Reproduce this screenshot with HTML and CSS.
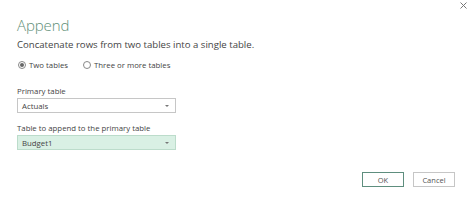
FILE: index.html
```html
<!DOCTYPE html>
<html lang="en">
<head>
    <meta charset="UTF-8">
    <title>Append</title>
    <link rel="stylesheet" href="styles.css">
</head>
<body>
    <div class="dialog">
        <button type="button" class="close" aria-label="Close">
            <svg width="7" height="7" viewBox="0 0 7 7"><path d="M0.5 0.5L6.5 6.5M6.5 0.5L0.5 6.5" stroke="#777" stroke-width="1" fill="none"/></svg>
        </button>
        <h1>Append</h1>
        <p class="intro">Concatenate rows from two tables into a single table.</p>

        <div class="radio-row">
            <label><span class="radio checked"></span>Two tables</label>
            <label><span class="radio"></span>Three or more tables</label>
        </div>

        <label class="field-label first">Primary table</label>
        <div class="select">
            <span>Actuals</span>
            <span class="arrow"></span>
        </div>

        <label class="field-label">Table to append to the primary table</label>
        <div class="select active">
            <span>Budget1</span>
            <span class="arrow"></span>
        </div>

        <div class="buttons">
            <button type="button" class="btn ok">OK</button>
            <button type="button" class="btn">Cancel</button>
        </div>
    </div>
</body>
</html>
```

FILE: styles.css
```css
body {
    margin: 0;
    background-color: #fff;
    font-family: "Open Sans", "Noto Sans", sans-serif;
    color: #444;
}
.dialog {
    position: relative;
    width: 474px;
    height: 206px;
    padding: 0 19px 0 17px;
    box-sizing: border-box;
}
.close {
    position: absolute;
    top: 2px;
    right: 7px;
    border: none;
    background: none;
    padding: 0;
    width: 7px;
    height: 7px;
    line-height: 0;
}
h1 {
    margin: 0;
    padding-top: 15px;
    font-size: 15px;
    font-weight: 300;
    line-height: 20px;
    color: #5f8f78;
    letter-spacing: -0.1px;
}
.intro {
    margin: 3px 0 0;
    font-size: 9.6px;
    line-height: 14px;
    color: #444;
}
.radio-row {
    display: flex;
    gap: 14px;
    margin-top: 6px;
    font-size: 7.8px;
    line-height: 14px;
}
.radio-row label {
    display: flex;
    align-items: center;
}
.radio {
    width: 6px;
    height: 6px;
    border: 1px solid #888;
    border-radius: 50%;
    margin: 0 3px 0 1px;
    display: inline-flex;
    align-items: center;
    justify-content: center;
}
.radio.checked::after {
    content: "";
    width: 4px;
    height: 4px;
    border-radius: 50%;
    background-color: #666;
}
.field-label {
    display: block;
    margin-top: 8px;
    font-size: 7.8px;
    line-height: 14px;
}
.field-label.first {
    margin-top: 12px;
}
.select {
    width: 159px;
    height: 15px;
    border: 1px solid #c6c6c6;
    box-sizing: border-box;
    display: flex;
    align-items: center;
    justify-content: space-between;
    padding: 0 6px 0 4px;
    font-size: 7.8px;
}
.select.active {
    background-color: #d9f0e4;
    border-color: #bcdccb;
}
.arrow {
    width: 0;
    height: 0;
    border-left: 2px solid transparent;
    border-right: 2px solid transparent;
    border-top: 2px solid #777;
}
.buttons {
    display: flex;
    justify-content: flex-end;
    gap: 9px;
    margin-top: 22px;
}
.btn {
    width: 42px;
    height: 15px;
    padding: 0;
    border: 1px solid #c6c6c6;
    background-color: #fff;
    font-family: "Open Sans", "Noto Sans", sans-serif;
    font-size: 7.5px;
    color: #555;
    box-sizing: border-box;
}
.btn.ok {
    border-color: #5e8e7e;
}
```
